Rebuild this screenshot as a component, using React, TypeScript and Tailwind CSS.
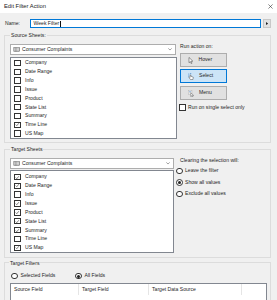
import React from "react";

const ITEMS = ["Company", "Date Range", "Info", "Issue", "Product", "State List", "Summary", "Time Line", "US Map"];

function Box({ on }: { on?: boolean }) {
  return (
    <span className="flex h-[6.5px] w-[6.5px] shrink-0 items-center justify-center border border-[#333333] bg-white">
      {on && (
        <svg viewBox="0 0 6 6" className="h-[5px] w-[5px]">
          <path d="M0.9 3.1 L2.4 4.6 L5.1 1.3" fill="none" stroke="#333333" strokeWidth="0.8" />
        </svg>
      )}
    </span>
  );
}

function Radio({ on }: { on?: boolean }) {
  return (
    <span className="flex h-[6.5px] w-[6.5px] shrink-0 items-center justify-center rounded-full border border-[#333333] bg-white">
      {on && <span className="h-[3px] w-[3px] rounded-full bg-[#222222]" />}
    </span>
  );
}

function GridIcon() {
  return (
    <svg viewBox="0 0 8 6" className="h-[5px] w-[7.5px] shrink-0">
      <rect x="0.5" y="0.5" width="7" height="5" fill="none" stroke="#666" strokeWidth="0.7" />
      <line x1="0.5" y1="2.2" x2="7.5" y2="2.2" stroke="#666" strokeWidth="0.6" />
      <line x1="0.5" y1="3.9" x2="7.5" y2="3.9" stroke="#666" strokeWidth="0.6" />
      <line x1="3" y1="0.5" x2="3" y2="5.5" stroke="#666" strokeWidth="0.6" />
    </svg>
  );
}

function Drop({ cls }: { cls: string }) {
  return (
    <div className={cls}>
      <div className="flex items-center gap-[2px]">
        <GridIcon />
        <span>Consumer Complaints</span>
      </div>
      <svg viewBox="0 0 5 3" className="h-[2.5px] w-[4px]">
        <path d="M0.4 0.4 L2.5 2.5 L4.6 0.4" fill="none" stroke="#555" strokeWidth="0.7" />
      </svg>
    </div>
  );
}

function SheetList({ cls, checked }: { cls: string; checked: string[] }) {
  return (
    <div className={cls}>
      {ITEMS.map((it) => (
        <div key={it} className="flex h-[8.85px] items-center gap-[4.5px] pl-[3px]">
          <Box on={checked.includes(it)} />
          <span>{it}</span>
        </div>
      ))}
    </div>
  );
}

function HoverIcon() {
  return (
    <svg viewBox="0 0 6 8" className="h-[7px] w-[5.5px] shrink-0">
      <path d="M1 0.5 L1 6.6 L2.5 5.2 L3.5 7.5 L4.4 7.1 L3.4 4.8 L5.4 4.8 Z" fill="white" stroke="#444" strokeWidth="0.6" />
    </svg>
  );
}

function SelectIcon() {
  return (
    <svg viewBox="0 0 7 8" className="h-[7px] w-[6px] shrink-0">
      <circle cx="1" cy="1.2" r="0.6" fill="#3d7fc4" />
      <circle cx="3.2" cy="0.6" r="0.6" fill="#3d7fc4" />
      <circle cx="0.6" cy="3.4" r="0.6" fill="#3d7fc4" />
      <path d="M2.4 2.2 L2.4 5.2 L1.6 4.6 L1.2 5.2 L2.8 7.5 L5.8 7.5 L6.2 4.8 L4 4 L3.4 4 L3.4 2.2 Z" fill="white" stroke="#444" strokeWidth="0.55" />
    </svg>
  );
}

function MenuIcon() {
  return (
    <svg viewBox="0 0 7 8" className="h-[7px] w-[6px] shrink-0">
      <rect x="0.4" y="0.4" width="4" height="4.6" fill="white" stroke="#666" strokeWidth="0.5" strokeDasharray="0.8 0.5" />
      <line x1="1.2" y1="1.8" x2="3.6" y2="1.8" stroke="#3d7fc4" strokeWidth="0.6" />
      <line x1="1.2" y1="3.2" x2="3.6" y2="3.2" stroke="#888" strokeWidth="0.5" />
      <path d="M3.2 3.2 L3.2 7.6 L4.3 6.6 L5 8 L5.7 7.7 L5.1 6.3 L6.6 6.3 Z" fill="white" stroke="#444" strokeWidth="0.5" />
    </svg>
  );
}

function ActBtn({ label, sel, icon }: { label: string; sel?: boolean; icon: React.ReactNode }) {
  return (
    <div
      className={
        sel
          ? "flex h-[14px] w-[47px] items-center gap-[5px] border border-[#0078d7] bg-[#cce4f7] pl-[7px]"
          : "flex h-[14px] w-[47px] items-center gap-[5px] border border-[#adadad] bg-[#e1e1e1] pl-[7px]"
      }
    >
      {icon}
      <span>{label}</span>
    </div>
  );
}

export default function App() {
  return (
    <div className="relative flex h-[300px] w-[277px] flex-col overflow-hidden bg-[#f0f0f0] font-['Liberation_Sans',Arial,sans-serif] text-[5.1px] leading-none text-[#1e1e1e]">
      {/* title bar */}
      <div className="flex h-[13px] shrink-0 items-center justify-between bg-white pl-[4px] pr-[4px]">
        <span className="text-[5.8px] text-[#222]">Edit Filter Action</span>
        <svg viewBox="0 0 6 6" className="h-[5px] w-[5px]">
          <path d="M0.5 0.5 L5.5 5.5 M5.5 0.5 L0.5 5.5" stroke="#333" strokeWidth="0.7" />
        </svg>
      </div>

      {/* name row */}
      <div className="mt-[6px] flex h-[9px] shrink-0 items-center">
        <span className="w-[30px] pl-[5px]">Name:</span>
        <div className="flex h-[9px] w-[231px] items-center border border-[#0078d7] bg-white pl-[2.5px]">
          <span>Week Filter</span>
          <span className="ml-[0.5px] h-[6px] w-[0.6px] bg-[#111]" />
        </div>
        <div className="ml-[2px] flex h-[9px] w-[8px] items-center justify-center border border-[#c8c8c8] bg-[#e1e1e1]">
          <svg viewBox="0 0 3 4" className="h-[3px] w-[2.2px]">
            <path d="M0 0 L3 2 L0 4 Z" fill="#222" />
          </svg>
        </div>
      </div>

      {/* source sheets group */}
      <div className="relative mx-[4px] mt-[7px] h-[108px] w-[267px] shrink-0 border border-[#dcdcdc]">
        <span className="absolute left-[5px] top-[-3px] bg-[#f0f0f0] px-[1px]">Source Sheets:</span>
        <div className="flex pl-[5px] pt-[8px]">
          <div className="flex w-[167px] flex-col">
            <Drop cls="flex h-[11px] w-[166px] items-center justify-between border border-[#adadad] bg-white pl-[1.5px] pr-[3px]" />
            <SheetList cls="mt-[2px] h-[82px] w-[167px] border border-[#828790] bg-white pt-[0.5px]" checked={["Time Line"]} />
          </div>
          <div className="ml-[3px] flex flex-col">
            <div className="flex h-[6px] items-center">Run action on:</div>
            <div className="mt-[3px]">
              <ActBtn label="Hover" icon={<HoverIcon />} />
            </div>
            <div className="mt-[2px]">
              <ActBtn label="Select" sel icon={<SelectIcon />} />
            </div>
            <div className="mt-[3px]">
              <ActBtn label="Menu" icon={<MenuIcon />} />
            </div>
            <div className="ml-[-1px] mt-[4px] flex items-center gap-[2.5px]">
              <Box />
              <span>Run on single select only</span>
            </div>
          </div>
        </div>
      </div>

      {/* target sheets group */}
      <div className="relative mx-[4px] mt-[6px] h-[109px] w-[267px] shrink-0 border border-[#dcdcdc]">
        <span className="absolute left-[5px] top-[-3px] bg-[#f0f0f0] px-[1px]">Target Sheets</span>
        <div className="flex pl-[5px] pt-[8px]">
          <div className="flex w-[164px] flex-col">
            <Drop cls="flex h-[11px] w-[164px] items-center justify-between border border-[#adadad] bg-white pl-[1.5px] pr-[3px]" />
            <SheetList
              cls="mt-[1px] h-[83px] w-[164px] border border-[#828790] bg-white pt-[1.6px]"
              checked={["Company", "Date Range", "Issue", "Product", "State List", "Summary", "US Map"]}
            />
          </div>
          <div className="ml-[2px] flex flex-col">
            <div className="flex h-[6px] items-center pl-[4px]">Clearing the selection will:</div>
            <div className="mt-[1.25px] flex h-[11.5px] items-center gap-[2.5px]">
              <Radio />
              <span>Leave the filter</span>
            </div>
            <div className="flex h-[11.5px] items-center gap-[2.5px]">
              <Radio on />
              <span>Show all values</span>
            </div>
            <div className="flex h-[11.5px] items-center gap-[2.5px]">
              <Radio />
              <span>Exclude all values</span>
            </div>
          </div>
        </div>
      </div>

      {/* target filters group */}
      <div className="relative mx-[4px] mt-[4px] h-[60px] w-[267px] shrink-0 border border-[#dcdcdc]">
        <span className="absolute left-[4px] top-[-2px] bg-[#f0f0f0] px-[1px]">Target Filters</span>
        <div className="flex h-[7px] items-center pl-[6px] mt-[9.5px]">
          <div className="flex w-[64px] items-center gap-[3px]">
            <Radio />
            <span>Selected Fields</span>
          </div>
          <div className="flex items-center gap-[3px]">
            <Radio on />
            <span>All Fields</span>
          </div>
        </div>
        <div className="ml-[5px] mt-[3.5px] h-[40px] w-[257px] border border-[#828790] bg-white">
          <div className="flex h-[11px] items-center">
            <div className="flex h-full w-[68px] items-center border-r border-[#e5e5e5] pl-[3px]">Source Field</div>
            <div className="flex h-full w-[70px] items-center border-r border-[#e5e5e5] pl-[3px]">Target Field</div>
            <div className="flex h-full w-[93px] items-center border-r border-[#e5e5e5] pl-[3px]">Target Data Source</div>
            <div className="h-full flex-1" />
          </div>
        </div>
      </div>
    </div>
  );
}
